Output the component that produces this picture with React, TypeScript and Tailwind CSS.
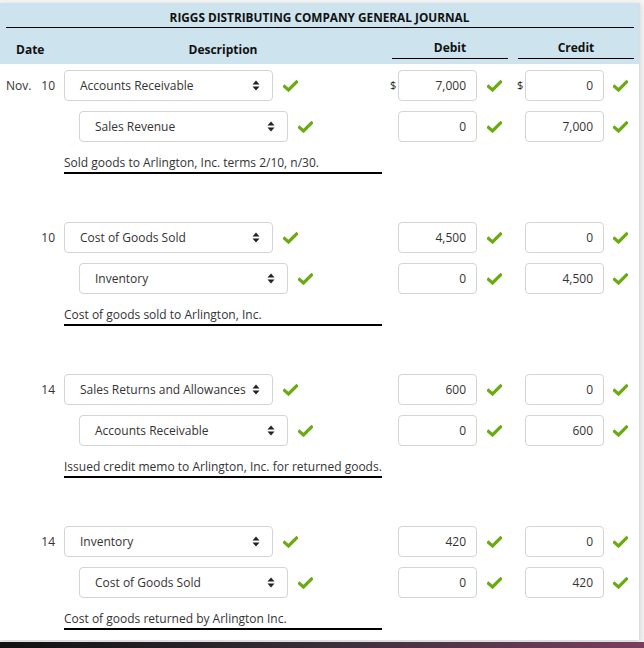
const font = { fontFamily: '"Open Sans", "Liberation Sans", sans-serif' };

type Line = { account: string; debit: string; credit: string };
type Entry = { month?: string; day: string; lines: [Line, Line]; memo: string };

const entries: Entry[] = [
  {
    month: "Nov.",
    day: "10",
    lines: [
      { account: "Accounts Receivable", debit: "7,000", credit: "0" },
      { account: "Sales Revenue", debit: "0", credit: "7,000" },
    ],
    memo: "Sold goods to Arlington, Inc. terms 2/10, n/30.",
  },
  {
    day: "10",
    lines: [
      { account: "Cost of Goods Sold", debit: "4,500", credit: "0" },
      { account: "Inventory", debit: "0", credit: "4,500" },
    ],
    memo: "Cost of goods sold to Arlington, Inc.",
  },
  {
    day: "14",
    lines: [
      { account: "Sales Returns and Allowances", debit: "600", credit: "0" },
      { account: "Accounts Receivable", debit: "0", credit: "600" },
    ],
    memo: "Issued credit memo to Arlington, Inc. for returned goods.",
  },
  {
    day: "14",
    lines: [
      { account: "Inventory", debit: "420", credit: "0" },
      { account: "Cost of Goods Sold", debit: "0", credit: "420" },
    ],
    memo: "Cost of goods returned by Arlington Inc.",
  },
];

function Check() {
  return (
    <svg width="15" height="12" viewBox="0 0 15 12" className="shrink-0">
      <path d="M1.5 6.5 L5.5 10 L13.5 2" fill="none" stroke="#6aab12" strokeWidth="3.2" strokeLinecap="square" strokeLinejoin="miter" />
    </svg>
  );
}

function UpDown() {
  return (
    <svg width="8" height="11" viewBox="0 0 8 11" className="shrink-0">
      <path d="M4 0.5 L7.5 4.5 L0.5 4.5 Z" fill="#222" />
      <path d="M4 10.5 L7.5 6.5 L0.5 6.5 Z" fill="#222" />
    </svg>
  );
}

function Select({ label }: { label: string }) {
  return (
    <div className="w-[209px] h-[31px] shrink-0 flex items-center justify-between pl-[15px] pr-[12px] border border-[#d4d4d4] rounded-[4px] bg-white text-[#333]">
      <span className="whitespace-nowrap">{label}</span>
      <UpDown />
    </div>
  );
}

function Amount({ value }: { value: string }) {
  return (
    <div className="w-[79px] h-[31px] shrink-0 flex items-center justify-end pr-[10px] border border-[#d4d4d4] rounded-[4px] bg-white text-[#333]">
      {value}
    </div>
  );
}

function EntryBlock({ entry }: { entry: Entry }) {
  return (
    <div className="flex flex-col">
      {entry.lines.map((line, i) => (
        <div key={i} className={`flex items-center h-[31px] ${i === 1 ? "mt-[10px]" : ""}`}>
          <div className="w-[64px] shrink-0 flex justify-between pl-[6px] pr-[9px] text-[#333]">
            <span>{i === 0 ? entry.month ?? "" : ""}</span>
            <span>{i === 0 ? entry.day : ""}</span>
          </div>
          <div className="w-[326px] shrink-0 flex items-center">
            <div className={`flex items-center gap-[10px] ${i === 1 ? "ml-[15px]" : ""}`}>
              <Select label={line.account} />
              <Check />
            </div>
          </div>
          <span className="w-[8px] shrink-0 text-[#222] text-[11px]">{i === 0 && entry.month ? "$" : ""}</span>
          <Amount value={line.debit} />
          <div className="w-[40px] shrink-0 pl-[10px]">
            <Check />
          </div>
          <span className="w-[8px] shrink-0 text-[#222] text-[11px]">{i === 0 && entry.month ? "$" : ""}</span>
          <Amount value={line.credit} />
          <div className="pl-[9px]">
            <Check />
          </div>
        </div>
      ))}
      <div className="pl-[64px] mt-[12px]">
        <div className="w-[318px] leading-[18px] text-[#333] whitespace-nowrap">{entry.memo}</div>
        <div className="w-[318px] h-[2px] bg-black" />
      </div>
    </div>
  );
}

export default function App() {
  return (
    <div className="w-[644px] h-[648px] bg-[#f4f4f4] flex flex-col text-[12px] overflow-hidden" style={font}>
      <div className="mt-[3px] w-[640px] flex-1 bg-white border-r border-[#dcdcdc] shadow-[0_2px_6px_rgba(0,0,0,0.15)] flex flex-col">
        <div className="h-[61px] bg-[#cde3ed] flex flex-col text-[#111] font-bold">
          <div className="px-[6px] pt-[6px]">
            <div className="text-center text-[11.8px] leading-[16px]">RIGGS DISTRIBUTING COMPANY GENERAL JOURNAL</div>
            <div className="h-px bg-black mt-[2px] w-[628px]" />
          </div>
          <div className="flex items-end text-[12px] mt-[11px]">
            <div className="w-[64px] pl-[16px]">Date</div>
            <div className="w-[318px] text-center">Description</div>
            <div className="ml-[10px] w-[116px] text-center">
              <div className="leading-[18px]">Debit</div>
              <div className="h-px bg-black mt-[1px]" />
            </div>
            <div className="ml-[10px] w-[116px] text-center">
              <div className="leading-[18px]">Credit</div>
              <div className="h-px bg-black mt-[1px]" />
            </div>
          </div>
        </div>
        <div className="flex flex-col gap-[48px] pt-[6px]">
          {entries.map((e, i) => (
            <EntryBlock key={i} entry={e} />
          ))}
        </div>
      </div>
      <div className="h-[6px] mt-[2px] bg-gradient-to-r from-[#111] via-[#3a2f3a] to-[#7a3e5e]" />
    </div>
  );
}
